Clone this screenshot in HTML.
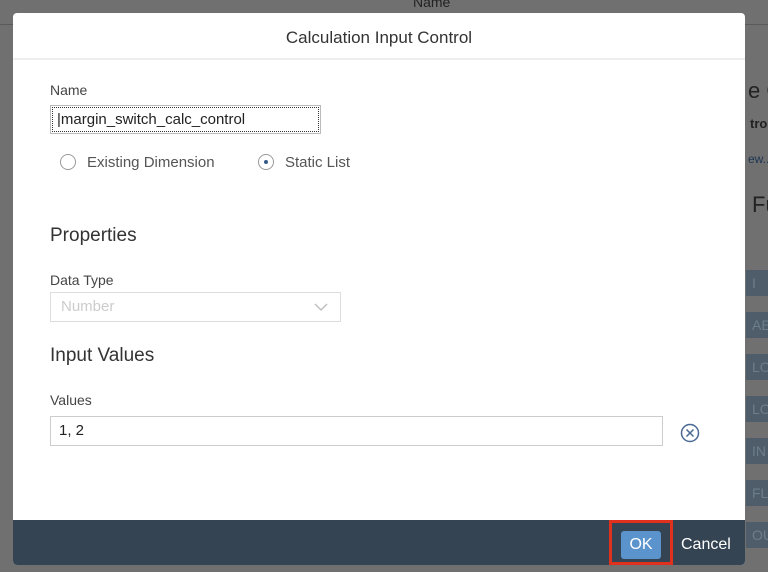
<!DOCTYPE html>
<html><head><style>
body{margin:0;width:768px;height:572px;background:#707070;position:relative;overflow:hidden;font-family:"Liberation Sans",sans-serif;}
.bg{position:absolute;color:#222;white-space:nowrap}
.btn{position:absolute;left:746px;width:30px;height:26px;background:#4f5d6b;color:#6d7d8c;font-size:14px;line-height:26px;padding-left:6px}
.dlg{position:absolute;left:13px;top:13px;width:732px;height:552px;background:#fff;border-radius:4px;overflow:hidden}
.hdr{height:45px;border-bottom:2px solid #eee;text-align:center;line-height:50px;font-size:17px;color:#333}
.lbl{position:absolute;left:37px;font-size:14px;color:#444;white-space:nowrap}
.h2{position:absolute;left:37px;font-size:19px;color:#333}
.ftr{position:absolute;left:0;bottom:0;width:100%;height:45px;background:#354452}
.radio{position:absolute;width:14px;height:14px;border:1.5px solid #999;border-radius:50%}
</style></head><body>
<div class="bg" style="left:413px;top:-6px;font-size:14px">Name</div>
<div style="position:absolute;left:0;top:24px;width:768px;height:1px;background:#5a5a5a"></div>
<div class="bg" style="left:748px;top:78px;font-size:22px">e C</div>
<div class="bg" style="left:750px;top:116px;font-size:13px;font-weight:bold">tro</div>
<div class="bg" style="left:748px;top:152px;font-size:12px;color:#1c3552">ew...</div>
<div class="bg" style="left:752px;top:192px;font-size:22px">Fu</div>
<div class="btn" style="top:270px">I</div>
<div class="btn" style="top:312px">AE</div>
<div class="btn" style="top:354px">LO</div>
<div class="btn" style="top:396px">LO</div>
<div class="btn" style="top:438px">IN</div>
<div class="btn" style="top:480px">FL</div>
<div class="btn" style="top:522px">OU</div>
<div class="dlg">
<div class="hdr">Calculation Input Control</div>
<div class="lbl" style="top:69px">Name</div>
<div style="position:absolute;left:37px;top:92px;border:1px solid #bbb;outline:1px dotted #333;outline-offset:-3px;font-size:15px;line-height:27px;padding-left:6px;color:#222;box-sizing:border-box;width:271px;height:29px">|margin_switch_calc_control</div>
<div class="radio" style="left:47px;top:141px"></div>
<div class="lbl" style="left:74px;top:141px;font-size:15px;color:#555">Existing Dimension</div>
<div class="radio" style="left:245px;top:141px"><div style="width:4px;height:4px;background:#345a8a;border-radius:50%;margin:5px"></div></div>
<div class="lbl" style="left:272px;top:141px;font-size:15px;color:#555">Static List</div>
<div class="h2" style="top:212px">Properties</div>
<div class="lbl" style="top:259px">Data Type</div>
<div style="position:absolute;left:37px;top:279px;width:291px;height:30px;border:1px solid #ddd;box-sizing:border-box;font-size:15px;line-height:28px;padding-left:10px;color:#ccc">Number<svg style="position:absolute;right:12px;top:10px" width="14" height="8"><path d="M1 1L7 7L13 1" fill="none" stroke="#bbb" stroke-width="1.3"/></svg></div>
<div class="h2" style="top:332px">Input Values</div>
<div class="lbl" style="top:379px">Values</div>
<div style="position:absolute;left:37px;top:403px;width:613px;height:30px;border:1px solid #ccc;box-sizing:border-box;font-size:15px;line-height:28px;padding-left:8px;color:#222">1, 2</div>
<svg style="position:absolute;left:667px;top:410px" width="20" height="20"><circle cx="10" cy="10" r="8.5" fill="none" stroke="#4a6a95" stroke-width="1.5"/><path d="M6.5 6.5L13.5 13.5M13.5 6.5L6.5 13.5" stroke="#4a6a95" stroke-width="1.5"/></svg>
<div class="ftr">
<div style="position:absolute;left:596px;top:0;width:64px;height:45px;border:3px solid #e0301e;box-sizing:border-box"></div>
<div style="position:absolute;left:608px;top:11px;width:40px;height:28px;background:#5b93cc;border-radius:3px;color:#fff;font-size:16px;line-height:28px;text-align:center">OK</div>
<div style="position:absolute;left:668px;top:11px;color:#fff;font-size:16px;line-height:28px">Cancel</div>
</div>
</div>
</body></html>
